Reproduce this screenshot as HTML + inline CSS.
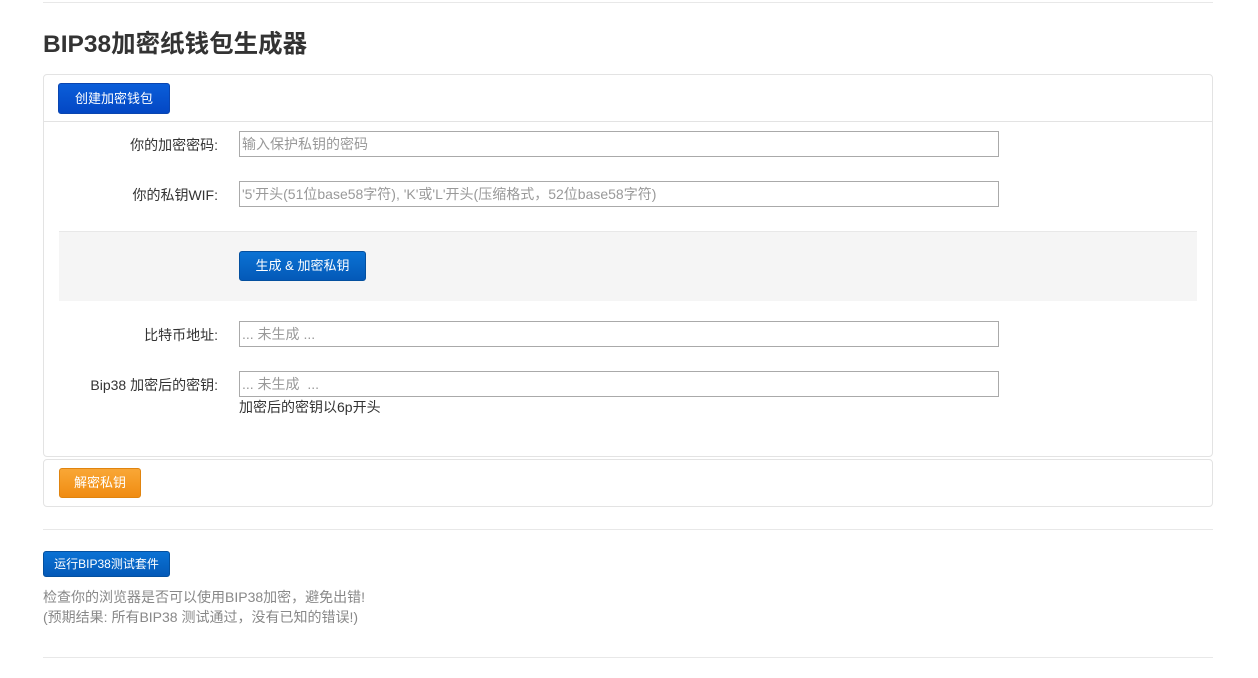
<!DOCTYPE html>
<html><head><meta charset="utf-8"><style>
*{box-sizing:border-box}
body{margin:0;width:1258px;height:678px;background:#fff;font-family:"Liberation Sans","Noto Sans CJK SC",sans-serif;font-size:14px;color:#333;position:relative;overflow:hidden}
.a{position:absolute}
.hr{position:absolute;left:43px;width:1170px;height:1px;background:#e8e8e8}
.btn{position:absolute;color:#fff;border-radius:3px;font-size:13px;text-align:center}
.blue{background:linear-gradient(#0a72d4,#0459b8);border:1px solid #04509f}
.inp{position:absolute;left:239px;width:760px;height:26px;border:1px solid #aaa;color:#999;font-size:14px;padding:2px 0 0 2px;line-height:20px}
.lbl{position:absolute;right:1040px;text-align:right;color:#333;line-height:20px}
</style></head><body>
<div class="hr" style="top:2px"></div>
<div class="a" style="left:43px;top:30px;font-size:24.5px;font-weight:bold;color:#333;line-height:30px">BIP38加密纸钱包生成器</div>
<div class="a" style="left:43px;top:74px;width:1170px;height:383px;border:1px solid #e3e3e3;border-radius:4px"></div>
<div class="a" style="left:44px;top:121px;width:1168px;height:1px;background:#e3e3e3"></div>
<div class="btn" style="left:58px;top:83px;width:112px;height:31px;line-height:29px;background:linear-gradient(#0b5ed9,#0347c4);border:1px solid #0a45b0">创建加密钱包</div>
<div class="lbl" style="top:135px">你的加密密码:</div>
<div class="inp" style="top:131px">输入保护私钥的密码</div>
<div class="lbl" style="top:185px">你的私钥WIF:</div>
<div class="inp" style="top:181px">'5'开头(51位base58字符), 'K'或'L'开头(压缩格式，52位base58字符)</div>
<div class="a" style="left:59px;top:231px;width:1138px;height:70px;background:#f5f5f5;border-top:1px solid #e8e8e8"></div>
<div class="btn blue" style="left:239px;top:251px;width:127px;height:30px;line-height:28px">生成 &amp; 加密私钥</div>
<div class="lbl" style="top:325px">比特币地址:</div>
<div class="inp" style="top:321px">... 未生成 ...</div>
<div class="lbl" style="top:375px">Bip38 加密后的密钥:</div>
<div class="inp" style="top:371px">... 未生成 &nbsp;...</div>
<div class="a" style="left:239px;top:397px;line-height:20px">加密后的密钥以6p开头</div>
<div class="a" style="left:43px;top:459px;width:1170px;height:48px;border:1px solid #e3e3e3;border-radius:4px"></div>
<div class="btn" style="left:59px;top:468px;width:82px;height:30px;line-height:28px;background:linear-gradient(#f9a736,#f08c12);border:1px solid #e0840f">解密私钥</div>
<div class="hr" style="top:529px"></div>
<div class="btn blue" style="left:43px;top:551px;width:127px;height:26px;line-height:24px;font-size:12px">运行BIP38测试套件</div>
<div class="a" style="left:43px;top:587px;color:#888;line-height:20px">检查你的浏览器是否可以使用BIP38加密，避免出错!<br>(预期结果: 所有BIP38 测试通过，没有已知的错误!)</div>
<div class="hr" style="top:657px"></div>
</body></html>
